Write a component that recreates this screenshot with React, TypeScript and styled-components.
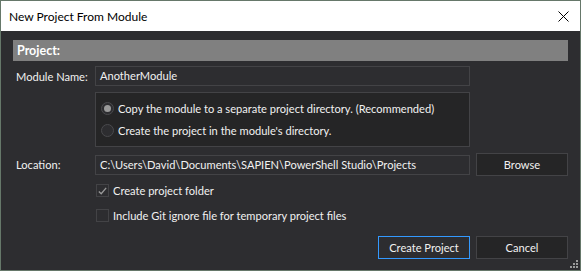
import styled, { createGlobalStyle } from "styled-components";

const GlobalStyle = createGlobalStyle`
	html, body {
		margin: 0;
		padding: 0;
		background: #2d2d30;
	}
	body {
		font-family: Lato, "Noto Sans", sans-serif;
		font-size: 11.1px;
	}
`;

function RadioOption({ checked, label }: { checked?: boolean; label: string }) {
	return (
		<OptionRow>
			<RadioCircle checked={checked} />
			<span>{label}</span>
		</OptionRow>
	);
}

function CheckOption({ checked, label }: { checked?: boolean; label: string }) {
	return (
		<CheckRow>
			<CheckBox>
				{checked && (
					<svg width="12" height="12" viewBox="0 0 12 12">
						<path d="M2 6.5 L4.6 9 L10 2.5" fill="none" stroke="#9a9a9a" strokeWidth="1.4" />
					</svg>
				)}
			</CheckBox>
			<span>{label}</span>
		</CheckRow>
	);
}

export default function App() {
	return (
		<Window>
			<GlobalStyle />
			<TitleBar>
				<Title>New Project From Module</Title>
				<CloseButton>
					<svg width="11" height="11" viewBox="0 0 11 11">
						<path d="M0.5 0.5 L10.5 10.5 M10.5 0.5 L0.5 10.5" stroke="#000" strokeWidth="1" />
					</svg>
				</CloseButton>
			</TitleBar>
			<Body>
				<SectionHeader>Project:</SectionHeader>
				<FormGrid>
					<Label>Module Name:</Label>
					<TextInput>AnotherModule</TextInput>
					<span />

					<span />
					<GroupBox>
						<RadioOption checked label="Copy the module to a separate project directory. (Recommended)" />
						<RadioOption label="Create the project in the module's directory." />
					</GroupBox>
					<span />

					<Label>Location:</Label>
					<TextInput>C:\Users\David\Documents\SAPIEN\PowerShell Studio\Projects</TextInput>
					<Button>Browse</Button>
				</FormGrid>
				<Options>
					<CheckOption checked label="Create project folder" />
					<CheckOption label="Include Git ignore file for temporary project files" />
				</Options>
				<Footer>
					<Button primary>Create Project</Button>
					<Button>Cancel</Button>
				</Footer>
			</Body>
			<Grip>
				<svg width="9" height="9" viewBox="0 0 9 9">
					<g fill="#9a9a9a">
						<rect x="6" y="0" width="2" height="2" />
						<rect x="3" y="3" width="2" height="2" />
						<rect x="6" y="3" width="2" height="2" />
						<rect x="0" y="6" width="2" height="2" />
						<rect x="3" y="6" width="2" height="2" />
						<rect x="6" y="6" width="2" height="2" />
					</g>
				</svg>
			</Grip>
		</Window>
	);
}

const Window = styled.div`
	position: relative;
	width: 581px;
	height: 271px;
	box-sizing: border-box;
	border: 1px solid #66786a;
	background: #2d2d30;
	display: flex;
	flex-direction: column;
	color: #f1f1f1;
	overflow: hidden;
`;

const TitleBar = styled.div`
	height: 30px;
	background: #ffffff;
	display: flex;
	align-items: center;
	justify-content: space-between;
	padding: 0 10px 0 8px;
	flex-shrink: 0;
`;

const Title = styled.div`
	color: #000;
	font-size: 12px;
`;

const CloseButton = styled.div`
	display: flex;
	align-items: center;
	margin-right: 1px;
`;

const Body = styled.div`
	flex: 1;
	padding: 9px 12px 0 12px;
	display: flex;
	flex-direction: column;
`;

const SectionHeader = styled.div`
	height: 21px;
	background: #808080;
	color: #ffffff;
	font-weight: bold;
	font-size: 12.5px;
	line-height: 21px;
	padding-left: 4px;
`;

const FormGrid = styled.div`
	display: grid;
	grid-template-columns: 76px 375px 92px;
	column-gap: 6px;
	row-gap: 6px;
	margin-top: 5px;
	align-items: center;
`;

const Label = styled.div`
	padding-left: 3px;
	color: #f1f1f1;
	white-space: nowrap;
`;

const TextInput = styled.div`
	height: 20px;
	box-sizing: border-box;
	border: 1px solid #434346;
	background: #2d2d30;
	padding: 0 4px;
	line-height: 18px;
	white-space: nowrap;
	overflow: hidden;
`;

const GroupBox = styled.div`
	height: 55px;
	box-sizing: border-box;
	border: 1px solid #434346;
	background: #252526;
	padding: 3px 5px;
	display: flex;
	flex-direction: column;
	justify-content: center;
	gap: 5px;
`;

const OptionRow = styled.div`
	display: flex;
	align-items: center;
	gap: 4px;
	height: 17px;
	white-space: nowrap;
`;

const RadioCircle = styled.span<{ checked?: boolean }>`
	width: 13px;
	height: 13px;
	box-sizing: border-box;
	border-radius: 50%;
	border: 1px solid #4a4a4d;
	background: #2d2d30;
	display: flex;
	align-items: center;
	justify-content: center;
	&::after {
		content: "";
		width: 7px;
		height: 7px;
		border-radius: 50%;
		background: ${(p) => (p.checked ? "#9a9a9a" : "transparent")};
	}
`;

const Options = styled.div`
	display: flex;
	flex-direction: column;
	gap: 12px;
	margin-top: 8px;
	padding-left: 83px;
`;

const CheckRow = styled.div`
	display: flex;
	align-items: center;
	gap: 4px;
	height: 13px;
	white-space: nowrap;
`;

const CheckBox = styled.span`
	width: 13px;
	height: 13px;
	box-sizing: border-box;
	border: 1px solid #434346;
	background: #2d2d30;
	display: flex;
	align-items: center;
	justify-content: center;
`;

const Footer = styled.div`
	display: flex;
	justify-content: flex-end;
	gap: 6px;
	margin-top: 14px;
`;

const Button = styled.div<{ primary?: boolean }>`
	width: 92px;
	height: 23px;
	box-sizing: border-box;
	border: 1px solid ${(p) => (p.primary ? "#3399ff" : "#434346")};
	background: ${(p) => (p.primary ? "#2d2d30" : "#252526")};
	color: #f1f1f1;
	display: flex;
	align-items: center;
	justify-content: center;
`;

const Grip = styled.div`
	position: absolute;
	right: 1px;
	bottom: 1px;
	line-height: 0;
`;
